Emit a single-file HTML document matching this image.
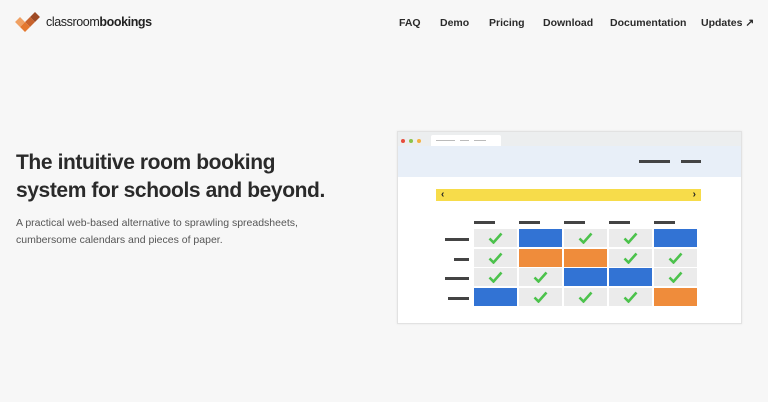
<!DOCTYPE html>
<html><head><meta charset="utf-8"><style>
*{margin:0;padding:0;box-sizing:border-box}
body{width:768px;height:402px;background:#f7f7f7;font-family:"Liberation Sans",sans-serif;position:relative;overflow:hidden;color:#2a2a2a}
.a{position:absolute}
.nav{top:17px;font-size:10.5px;font-weight:bold;color:#2a2a2a;white-space:nowrap}
h1{position:absolute;left:16px;top:149px;font-size:21px;line-height:28px;font-weight:bold;letter-spacing:-0.4px;color:#2a2a2a}
p{position:absolute;left:16px;top:215px;font-size:10.5px;line-height:16.5px;color:#555}
.bar{position:absolute;height:3px;background:#444}
.c{position:absolute;width:43px;height:18px;background:#ebebeb}
.b{background:#3273d4}.o{background:#ef8c3b}
.c svg{position:absolute;left:14px;top:3px}
</style></head><body>
<svg class="a" style="left:15px;top:11px" width="28" height="22" viewBox="0 0 28 22">
<rect x="1.5" y="7.5" width="7" height="7" transform="rotate(45 5 11)" fill="#f0a062"/>
<rect x="6.5" y="12.5" width="7" height="7" transform="rotate(45 10 16)" fill="#e4782e"/>
<rect x="11.5" y="7.5" width="7" height="7" transform="rotate(45 15 11)" fill="#c8632c"/>
<rect x="16.5" y="2.5" width="7" height="7" transform="rotate(45 20 6)" fill="#9e4a24"/>
</svg>
<div class="a" style="left:46px;top:15px;font-size:12.5px;letter-spacing:-0.4px;color:#222">classroom<b>bookings</b></div>
<div class="a nav" style="left:399px">FAQ</div>
<div class="a nav" style="left:440px">Demo</div>
<div class="a nav" style="left:489px">Pricing</div>
<div class="a nav" style="left:543px">Download</div>
<div class="a nav" style="left:610px">Documentation</div>
<div class="a nav" style="left:701px">Updates ↗</div>
<h1>The intuitive room booking<br>system for schools and beyond.</h1>
<p>A practical web-based alternative to sprawling spreadsheets,<br>cumbersome calendars and pieces of paper.</p>
<div class="a" style="left:397px;top:131px;width:345px;height:193px;background:#fff;border:1px solid #e2e2e2;box-shadow:0 0 2px rgba(0,0,0,.08)"></div>
<div class="a" style="left:398px;top:132px;width:343px;height:14px;background:#eceeef"></div>
<div class="a" style="left:401px;top:139px;width:4px;height:4px;border-radius:50%;background:#e74c3c"></div>
<div class="a" style="left:409px;top:139px;width:4px;height:4px;border-radius:50%;background:#8bc34a"></div>
<div class="a" style="left:417px;top:139px;width:4px;height:4px;border-radius:50%;background:#f5b041"></div>
<div class="a" style="left:431px;top:135px;width:70px;height:11px;background:#fff;border-radius:2px 2px 0 0"></div>
<div class="bar" style="left:436px;top:140px;width:19px;height:1px;background:#bbb"></div>
<div class="bar" style="left:460px;top:140px;width:9px;height:1px;background:#bbb"></div>
<div class="bar" style="left:474px;top:140px;width:12px;height:1px;background:#bbb"></div>
<div class="a" style="left:398px;top:146px;width:343px;height:31px;background:#e8eff8"></div>
<div class="bar" style="left:639px;top:160px;width:31px"></div>
<div class="bar" style="left:681px;top:160px;width:20px"></div>
<div class="a" style="left:436px;top:189px;width:265px;height:12px;background:#f7dc4a;font-size:10px;font-weight:bold;line-height:12px;color:#222"><span style="position:absolute;left:5px">‹</span><span style="position:absolute;right:5px">›</span></div>
<div class="bar" style="left:474px;top:221px;width:21px"></div>
<div class="bar" style="left:519px;top:221px;width:21px"></div>
<div class="bar" style="left:564px;top:221px;width:21px"></div>
<div class="bar" style="left:609px;top:221px;width:21px"></div>
<div class="bar" style="left:654px;top:221px;width:21px"></div>
<div class="bar" style="left:445px;top:238px;width:24px"></div>
<div class="bar" style="left:454px;top:258px;width:15px"></div>
<div class="bar" style="left:445px;top:277px;width:24px"></div>
<div class="bar" style="left:448px;top:297px;width:21px"></div>
<div id="g"></div>
<script>
var L=[474,519,564,609,654],T=[229,249,268,288];
var m=["kbkkb","kookk","kkbbk","bkkko"];
var h="";
var ck='<svg width="15" height="12" viewBox="0 0 15 12"><path d="M1.5 6.5L5.5 10.5L13.5 1.5" fill="none" stroke="#4cc24c" stroke-width="2.6"/></svg>';
for(var r=0;r<4;r++)for(var c=0;c<5;c++){var t=m[r][c];h+='<div class="c'+(t=="b"?" b":t=="o"?" o":"")+'" style="left:'+L[c]+'px;top:'+T[r]+'px">'+(t=="k"?ck:"")+'</div>';}
document.getElementById("g").innerHTML=h;
</script>
</body></html>
